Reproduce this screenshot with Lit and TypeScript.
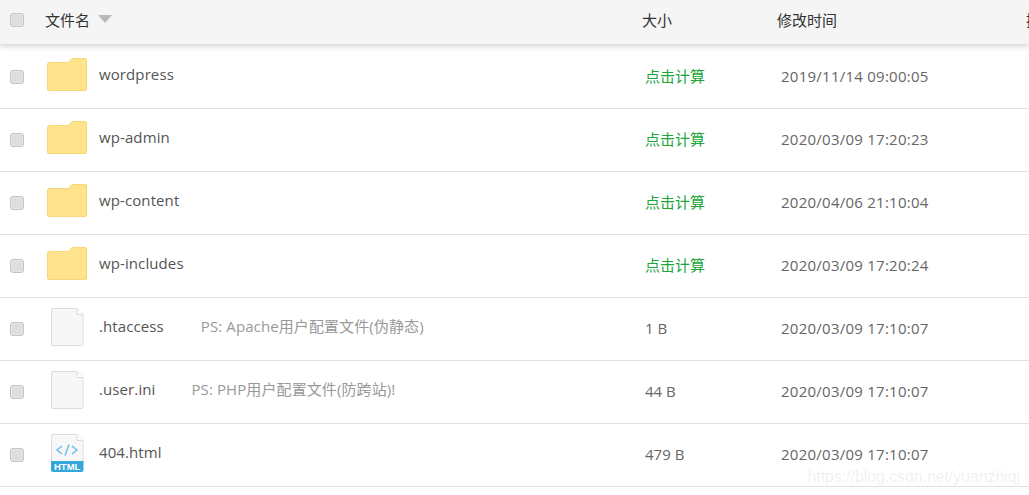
import { LitElement, html, css, svg } from "lit";
import { customElement } from "lit/decorators.js";

type Row = { name: string; icon: "folder" | "file" | "html"; note?: string; noteGap?: number; size: string; time: string };

const rows: Row[] = [
  { name: "wordpress", icon: "folder", size: "点击计算", time: "2019/11/14 09:00:05" },
  { name: "wp-admin", icon: "folder", size: "点击计算", time: "2020/03/09 17:20:23" },
  { name: "wp-content", icon: "folder", size: "点击计算", time: "2020/04/06 21:10:04" },
  { name: "wp-includes", icon: "folder", size: "点击计算", time: "2020/03/09 17:20:24" },
  { name: ".htaccess", icon: "file", note: "PS: Apache用户配置文件(伪静态)", noteGap: 37, size: "1 B", time: "2020/03/09 17:10:07" },
  { name: ".user.ini", icon: "file", note: "PS: PHP用户配置文件(防跨站)!", noteGap: 36, size: "44 B", time: "2020/03/09 17:10:07" },
  { name: "404.html", icon: "html", size: "479 B", time: "2020/03/09 17:10:07" },
];

const folder = svg`<svg class="ic" width="42" height="40" viewBox="0 0 42 40">
  <path d="M3.5 7.5 H22.5 L26 3.5 H39 a1.5 1.5 0 0 1 1.5 1.5 V34 a1.5 1.5 0 0 1 -1.5 1.5 H3 a1.5 1.5 0 0 1 -1.5 -1.5 V9.5 a2 2 0 0 1 2 -2 Z" fill="#ffe48d" stroke="#f6d677" stroke-width="1"/>
</svg>`;
const file = svg`<svg class="ic" width="42" height="40" viewBox="0 0 42 40">
  <path d="M7 1.5 H31 L37 7.5 V37 a1.5 1.5 0 0 1 -1.5 1.5 H7 a1.5 1.5 0 0 1 -1.5 -1.5 V3 a1.5 1.5 0 0 1 1.5 -1.5 Z" fill="#f7f7f7" stroke="#dcdcdc"/>
  <path d="M31 1.5 V7.5 H37" fill="#fff" stroke="#dcdcdc"/>
</svg>`;
const htmlIcon = svg`<svg class="ic" width="42" height="40" viewBox="0 0 42 40">
  <path d="M7 1.5 H31 L37 7.5 V30 H5.5 V3 a1.5 1.5 0 0 1 1.5 -1.5 Z" fill="#f7f7f7" stroke="#dcdcdc"/>
  <path d="M31 1.5 V7.5 H37" fill="#fff" stroke="#dcdcdc"/>
  <path d="M16 13 L11 17 L16 21 M26 13 L31 17 L26 21 M23 11.5 L19 22.5" fill="none" stroke="#6cbde8" stroke-width="1.5"/>
  <path d="M5 28 H37.5 V37 a2 2 0 0 1 -2 2 H7 a2 2 0 0 1 -2 -2 Z" fill="#35a6dc"/>
  <text x="21.2" y="36.8" text-anchor="middle" font-family="Liberation Sans, sans-serif" font-size="9.5" font-weight="700" fill="#fff">HTML</text>
</svg>`;

@customElement("app-root")
export class AppRoot extends LitElement {
  static styles = css`
    :host {
      display: block;
      position: relative;
      width: 1029px;
      height: 495px;
      overflow: hidden;
      background: #fff;
      font-family: "Open Sans", "Noto Sans CJK SC", sans-serif;
      font-size: 15px;
      color: #666;
    }
    .head, .row {
      display: grid;
      grid-template-columns: 45px 597px 135px 1fr;
      align-items: center;
    }
    .head {
      position: relative;
      height: 45px;
      background: #f5f5f5;
      color: #333;
      box-shadow: 0 1px 6px rgba(0, 0, 0, 0.2);
      border-bottom: 1px solid #e2e2e2;
      box-sizing: border-box;
    }
    .titlename { display: flex; align-items: center; gap: 8px; padding-bottom: 6px; }
    .caret {
      width: 0; height: 0;
      border-left: 7.5px solid transparent;
      border-right: 7.5px solid transparent;
      border-top: 8px solid #b9b9b9;
    }
    .head > span { padding-bottom: 6px; }
    .head .check { padding-bottom: 4px; }
    .cut { position: absolute; left: 1026px; top: 9px; }
    .row {
      height: 63px;
      box-sizing: border-box;
      border-bottom: 1px solid #e0e0e0;
    }
    .first { margin-top: 1px; }
    .check { display: flex; padding-left: 10px; }
    .box {
      width: 12px; height: 12px;
      border: 1px solid #c4c4c4;
      border-radius: 3px;
      background: #dedede;
      box-shadow: inset 0 0 0 1px #e6e6e6;
    }
    .namecell { display: flex; align-items: center; padding-bottom: 4px; }
    .ic { display: block; margin-left: 1px; margin-right: 11px; flex: none; }
    .name { color: #555; letter-spacing: 0.1px; padding-bottom: 2px; }
    .note { color: #999; letter-spacing: 0.1px; padding-bottom: 3px; }
    .size { padding-left: 3px; padding-bottom: 2px; }
    .size.calc { color: #20a53a; padding-bottom: 4px; }
    .time { padding-left: 4px; padding-bottom: 2px; letter-spacing: 0.25px; }
    .mark {
      position: absolute;
      right: 9px;
      top: 468px;
      font-family: "Liberation Sans", sans-serif;
      font-size: 15.8px;
      color: rgba(120, 120, 120, 0.12);
      pointer-events: none;
    }
  `;

  render() {
    return html`
      <div class="head">
        <div class="check"><div class="box"></div></div>
        <div class="titlename"><span>文件名</span><i class="caret"></i></div>
        <span>大小</span>
        <span>修改时间</span>
        <span class="cut">操</span>
      </div>
      ${rows.map((r, i) => html`
        <div class="row ${i === 0 ? "first" : ""}">
          <div class="check"><div class="box"></div></div>
          <div class="namecell">
            ${r.icon === "folder" ? folder : r.icon === "file" ? file : htmlIcon}
            <span class="name">${r.name}</span>
            ${r.note ? html`<span class="note" style="margin-left:${r.noteGap}px">${r.note}</span>` : ""}
          </div>
          <div class="size ${r.size === "点击计算" ? "calc" : ""}">${r.size}</div>
          <div class="time">${r.time}</div>
        </div>
      `)}
      <div class="mark">https://blog.csdn.net/yuanzhiqj</div>
    `;
  }
}
